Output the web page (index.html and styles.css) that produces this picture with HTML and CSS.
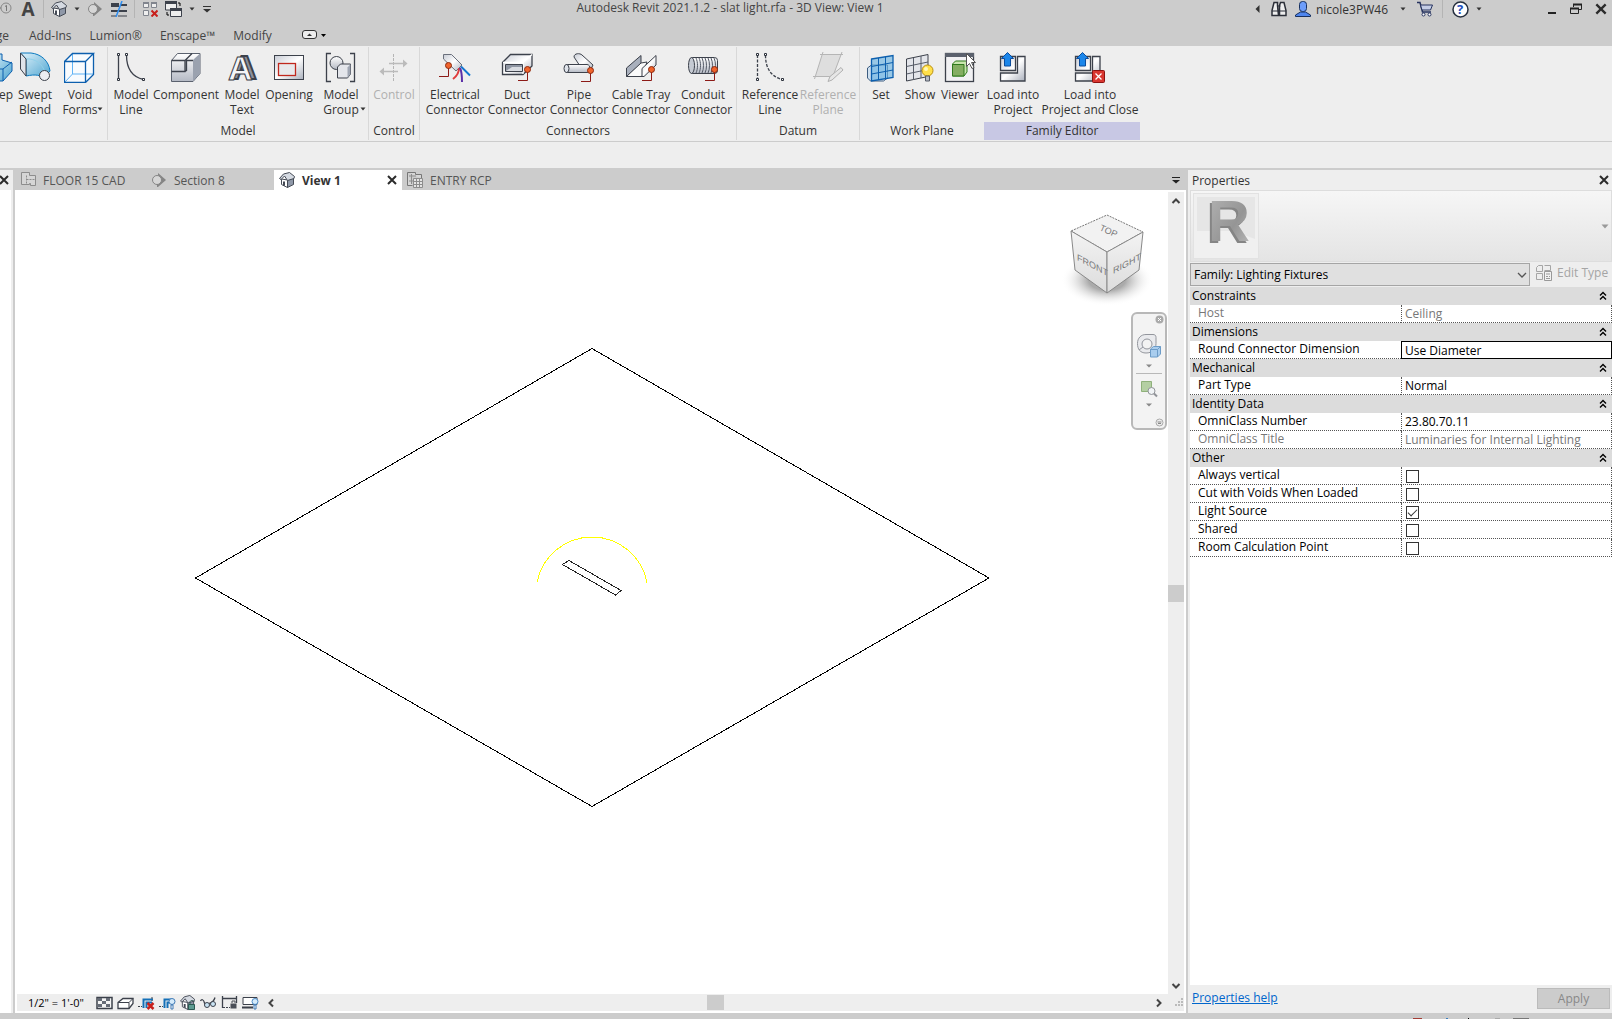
FILE: index.html
```
<!DOCTYPE html>
<html lang="en">
<head>
  <meta charset="UTF-8" />
  <meta name="viewport" content="width=device-width, initial-scale=1" />
  <title>Autodesk Revit 2021.1.2 - slat light.rfa - 3D View: View 1</title>
  <link rel="stylesheet" href="styles.css">
</head>
<body>
  <!-- shared gradients and symbols -->
  <svg class="defs" width="0" height="0" aria-hidden="true">
    <defs>
      <linearGradient id="metal" x1="0" y1="0" x2="0" y2="1"><stop offset="0" stop-color="#fff"/><stop offset="1" stop-color="#b4b9c4"/></linearGradient>
      <linearGradient id="metal-side" x1="0" y1="0" x2="1" y2="1"><stop offset="0" stop-color="#c9cdd6"/><stop offset="0.5" stop-color="#fff"/><stop offset="1" stop-color="#aab0bc"/></linearGradient>
      <linearGradient id="blue" x1="0" y1="0" x2="1" y2="1"><stop offset="0" stop-color="#dff2fb"/><stop offset="1" stop-color="#4ba3cf"/></linearGradient>
      <linearGradient id="cube-face" x1="0" y1="0" x2="0" y2="1"><stop offset="0" stop-color="#f3f3f3"/><stop offset="1" stop-color="#dcdcdc"/></linearGradient>
      <linearGradient id="logo" x1="0" y1="0" x2="1" y2="1"><stop offset="0" stop-color="#b5b5b5"/><stop offset="0.6" stop-color="#959595"/><stop offset="1" stop-color="#bdbdbd"/></linearGradient>
      <radialGradient id="shadow"><stop offset="0.4" stop-color="#aaa"/><stop offset="1" stop-color="#fff" stop-opacity="0"/></radialGradient>
      <symbol id="house" viewBox="0 0 16 16">
        <path d="M2.500 7V12.500l6 3V8z" fill="#fff" stroke="#444a55"/>
        <path d="M8.500 8 14.500 6v6.500l-6 3z" fill="#8f98a8" stroke="#444a55"/>
        <path d="M0.500 6.500 4.500 2l6-1.500 5 4-0.500 2-6.500 2-3-4.500-3.500 3.500z" fill="#d5dae2" stroke="#444a55"/>
        <path d="M4 9.500h2V14L4 13z" fill="#444a55"/>
      </symbol>
      <symbol id="section" viewBox="0 0 16 16">
        <path d="M7 1 15 8l-8 7z" fill="#858585"/>
        <circle cx="6" cy="8" r="4.500" fill="#d6d6d6" stroke="#858585"/>
        <path d="M6.500 12v3" stroke="#858585"/>
      </symbol>
      <symbol id="close" viewBox="0 0 12 12"><path d="M2 2l8 8M10 2l-8 8" stroke="#2b2b2b" stroke-width="2"/></symbol>
      <symbol id="caret" viewBox="0 0 6 4"><path d="M0.500 0.500h5L3 3.500z" fill="#333"/></symbol>
      <symbol id="collapse" viewBox="0 0 8 10"><path d="M1 4.500 4 1.500 7 4.500M1 8.500 4 5.500 7 8.500" fill="none" stroke="#000" stroke-width="1.400"/></symbol>
    </defs>
  </svg>

  <header class="titlebar">
    <div class="quick-access">
      <button class="qa" aria-label="Tag"><svg width="12" height="16" viewBox="0 0 12 16"><circle cx="6" cy="7" r="5" fill="none" stroke="#888"/><path d="M0 7h1M5 5.500l1.500-1V10" fill="none" stroke="#777"/></svg></button>
      <button class="qa-text" aria-label="Text">A</button>
      <span class="bar-sep"></span>
      <button class="qa" aria-label="Default 3D View"><svg width="16" height="16"><use href="#house"/></svg></button>
      <button class="qa-caret" aria-label="3D View options"><svg width="6" height="4"><use href="#caret"/></svg></button>
      <button class="qa" aria-label="Section"><svg width="16" height="16"><use href="#section"/></svg></button>
      <button class="qa qa-wide" aria-label="Thin Lines"><svg width="18" height="16" viewBox="0 0 18 16"><path d="M1 2h8v4H1z" fill="#3c414b"/><path d="M1 10h7M11 4h6M9 10h8" stroke="#3c414b" stroke-width="2"/><path d="M1 15h5M8 15h9" stroke="#3c414b"/><path d="M12 0 6 16" stroke="#2f8ef0" stroke-width="1.500"/></svg></button>
      <span class="bar-sep"></span>
      <button class="qa" aria-label="Close Hidden Windows"><svg width="16" height="16" viewBox="0 0 16 16"><path d="M1.500 1.500h5v5h-5zM9.500 1.500h5v5h-5zM1.500 9.500h5v5h-5z" fill="#eee" stroke="#81858e"/><path d="M1 1h6v2H1zM9 1h6v2H9z" fill="#81858e"/><path d="M9.500 9.500l6 6M15.500 9.500l-6 6" stroke="#c8201c" stroke-width="2"/></svg></button>
      <button class="qa" aria-label="Switch Windows"><svg width="17" height="16" viewBox="0 0 17 16"><path d="M0.500 1h11v8h-11z" fill="#eee" stroke="#3c414b"/><path d="M0 0h12v3H0z" fill="#3c414b"/><path d="M5.500 8h11v7.500h-11z" fill="#eee" stroke="#3c414b"/><path d="M5 7h12v3H5z" fill="#3c414b"/><path d="M13 2h2v3M2 11v3h2" fill="none" stroke="#000"/></svg></button>
      <button class="qa-caret" aria-label="Window list"><svg width="6" height="4"><use href="#caret"/></svg></button>
      <button class="qa" aria-label="Customize Quick Access Toolbar"><svg width="10" height="8" viewBox="0 0 10 8"><path d="M1 1.500h8" stroke="#333"/><path d="M1 4h8L5 7.500z" fill="#333"/></svg></button>
    </div>
    <div class="window-title">Autodesk Revit 2021.1.2 - slat light.rfa - 3D View: View 1</div>
    <div class="info-center">
      <button class="qa-caret" aria-label="Collapse search"><svg width="5" height="8" viewBox="0 0 5 8"><path d="M4.500 0v8L0.500 4z" fill="#333"/></svg></button>
      <button class="qa" aria-label="Search"><svg width="16" height="16" viewBox="0 0 16 16"><path d="M3 1.500h3.500v3L7.500 14.500h-6.500v-5zM9.500 1.500H13l2 8v5H8.500v-10z" fill="#eee" stroke="#2b2f38" stroke-width="1.500"/><path d="M1 10h6M9 10h6M6.500 5h3" stroke="#2b2f38"/></svg></button>
      <button class="account"><svg width="16" height="16" viewBox="0 0 16 16"><path d="M0.500 15.500v-1.500l5-3h5l5 3v1.500z" fill="#4f86ee" stroke="#17305f"/><rect x="4.500" y="0.500" width="7" height="10" rx="3" fill="#6d9dfa" stroke="#17305f"/></svg>nicole3PW46<svg class="account-caret" width="6" height="4"><use href="#caret"/></svg></button>
      <button class="qa" aria-label="App Store"><svg width="16" height="16" viewBox="0 0 16 16"><path d="M0 1.500h3L5.500 11H14" fill="none" stroke="#26335f" stroke-width="1.500"/><path d="M3.500 4h12L13.500 9H5z" fill="#c4cde6" stroke="#26335f"/><circle cx="6.500" cy="13.500" r="1.500" fill="#fff" stroke="#26335f"/><circle cx="12.500" cy="13.500" r="1.500" fill="#fff" stroke="#26335f"/></svg></button>
      <span class="bar-sep"></span>
      <button class="qa qa-help" aria-label="Help"><svg width="17" height="17" viewBox="0 0 17 17"><circle cx="8.500" cy="8.500" r="7.500" fill="#fff" stroke="#26303f" stroke-width="1.500"/><text x="5" y="13" font-size="13" font-weight="bold" fill="#1e4fc0">?</text></svg></button>
      <button class="qa-caret" aria-label="Help options"><svg width="6" height="4"><use href="#caret"/></svg></button>
    </div>
    <div class="window-buttons">
      <button aria-label="Minimize"><svg width="12" height="12" viewBox="0 0 12 12"><path d="M2 10h8" stroke="#222" stroke-width="2"/></svg></button>
      <button aria-label="Restore"><svg width="12" height="12" viewBox="0 0 12 12"><path d="M3.500 4V1.500h8v5H9" fill="none" stroke="#222"/><path d="M3 1.500h9M0 5.500h9" stroke="#222" stroke-width="2"/><path d="M0.500 5v5.500h8V5" fill="none" stroke="#222"/></svg></button>
      <button aria-label="Close"><svg width="14" height="14"><use href="#close"/></svg></button>
    </div>
  </header>

  <nav class="menu-tabs">
    <a class="menu-first" href="#">ge</a>
    <a href="#">Add-Ins</a>
    <a href="#">Lumion®</a>
    <a href="#">Enscape™</a>
    <a href="#">Modify</a>
    <button class="ribbon-toggle" aria-label="Minimize ribbon"><svg width="24" height="10" viewBox="0 0 24 10"><rect x="0.500" y="0.500" width="14" height="8" rx="2.500" fill="#eee" stroke="#333"/><path d="M5 6h5L7.500 3.500z" fill="#333"/><path d="M19 4h5l-2.500 3z" fill="#000"/></svg></button>
  </nav>

  <section class="ribbon">
    <div class="panel panel-forms">
      <div class="tools">
        <button class="tool tool-first"><svg class="icon" viewBox="0 0 32 32"><path d="M14 3h7v6l10 3v8l-9 10H8V14h6z" fill="url(#blue)" stroke="#0c5fae"/><path d="M8 18h14v12M22 18l9-7" fill="none" stroke="#0c5fae"/></svg><span>ep</span></button>
        <button class="tool"><svg class="icon" viewBox="0 0 32 32"><path d="M1.500 2H12C22 3 30 10 31 20l-7 8C22 24 17 23 7 25V8z" fill="url(#blue)" stroke="#0c7ac0"/><path d="M7 8c9-1 17 5 19 14" fill="none" stroke="#8fd0ea"/><path d="M1.500 2 7 8v17L1.500 18z" fill="#dfe3ea" stroke="#3c414b"/><circle cx="25.500" cy="24.500" r="5" fill="#eceef2" stroke="#3c414b"/></svg><span>Swept<br>Blend</span></button>
        <button class="tool"><svg class="icon" viewBox="0 0 32 32"><path d="M8.500 2.500h21v21l-8 8h-21v-21z" fill="#f8fbfe"/><path d="M8.500 3v20H29M8.500 23 1 31" fill="none" stroke="#5fb2f5"/><path d="M0.500 10.500h21v21h-21zM0.500 10.500l8-8h21l-8 8M29.500 2.500v21l-8 8" fill="none" stroke="#0c5fae" stroke-width="1.300"/></svg><span>Void<br>Forms</span><svg class="drop" width="6" height="4"><use href="#caret"/></svg></button>
      </div>
    </div>
    <div class="panel panel-model">
      <div class="tools">
        <button class="tool"><svg class="icon" viewBox="0 0 32 32"><path d="M3.500 4v24M11.500 4c0 14 6 22 17 24.500" fill="none" stroke="#3c414b" stroke-width="1.300"/><path d="M2.500 2.500h2v2h-2zM2.500 27.500h2v2h-2zM10.500 2.500h2v2h-2zM27.500 27.500h2v2h-2z" fill="#fff" stroke="#2d323c"/></svg><span>Model<br>Line</span></button>
        <button class="tool"><svg class="icon" viewBox="0 0 32 32"><path d="M1.500 9.500 7.500 2.500H30v20l-7 8H1.500z" fill="url(#metal)" stroke="#5a616e"/><path d="M23 9 30 2.500v20l-7 8z" fill="#9ba2af"/><path d="M1.500 9.500H15v11H1.500M15 9.500 22 2.500M16.500 20V9.500H23M15 20.500l1.500-1" fill="none" stroke="#3c414b" stroke-width="1.300"/></svg><span>Component</span></button>
        <button class="tool"><svg class="icon" viewBox="0 0 32 32"><text class="glyph-a" x="6" y="28" font-size="34" fill="#8c929e" stroke="#3c414b" stroke-width="2">A</text><text class="glyph-a" x="2" y="29" font-size="34" fill="#f4f5f7" stroke="#3c414b">A</text></svg><span>Model<br>Text</span></button>
        <button class="tool"><svg class="icon" viewBox="0 0 32 32"><rect x="1.500" y="4.500" width="29" height="24" fill="url(#metal-side)" stroke="#3c414b"/><rect x="5.500" y="12.500" width="17" height="12" fill="#e8e9ec" stroke="#c0281e" stroke-width="1.300"/></svg><span>Opening</span></button>
        <button class="tool"><svg class="icon" viewBox="0 0 32 32"><path d="M6 2.500H1.500v28H6M25 2.500h4.500v28H25" fill="none" stroke="#3c414b" stroke-width="1.300"/><circle cx="11.500" cy="12" r="6.500" fill="url(#metal)" stroke="#3c414b"/><path d="M12.500 16l3-3h10v10l-3 4h-10z" fill="#e4e6eb" stroke="#3c414b"/><path d="M22.500 16.500l3-3.500v10l-3 4z" fill="#9fa6b3"/></svg><span>Model<br>Group</span><svg class="drop" width="6" height="4"><use href="#caret"/></svg></button>
      </div>
      <h2>Model</h2>
    </div>
    <div class="panel panel-control">
      <div class="tools">
        <button class="tool" disabled><svg class="icon" viewBox="0 0 32 32"><path d="M15.500 3v28" stroke="#b5b5b5" stroke-dasharray="3 1"/><path d="M11 12.500h15M20 20.500H5" stroke="#bbb" stroke-width="1.500"/><path d="M25 8.500l4.500 4-4.500 4zM6 16.500l-4.500 4 4.500 4z" fill="#bbb"/></svg><span>Control</span></button>
      </div>
      <h2>Control</h2>
    </div>
    <div class="panel panel-connectors">
      <div class="tools">
        <button class="tool"><svg class="icon" viewBox="0 0 32 32"><path d="M4.500 3.500h8L23 14l-6 6L4.500 8z" fill="url(#metal-side)" stroke="#6a707c"/><path d="M20 17c0 5-2 8-6 11" fill="none" stroke="#e03c3c" stroke-width="2"/><path d="M21 17c2 4 2 9 2 14" fill="none" stroke="#5b2fa8" stroke-width="2"/><path d="M22 15.500l9 9" stroke="#1376d0" stroke-width="2"/><path d="M9.500 15v10.500H0" fill="none" stroke="#8c1a16"/><circle cx="9.500" cy="14.500" r="3" fill="#f0642c" stroke="#8c2a10"/></svg><span>Electrical<br>Connector</span></button>
        <button class="tool"><svg class="icon" viewBox="0 0 32 32"><path d="M1.500 11.500l8-8H31V15l-9 8.500H1.500z" fill="url(#metal-side)" stroke="#3c414b" stroke-width="1.300"/><path d="M2 11.500h20V23M22 11.500l9-8" fill="none" stroke="#fff" stroke-width="1.300"/><path d="M4.500 13.500h17v7h-17z" fill="#d9dce2" stroke="#3c414b"/><path d="M5 14v6l6-4h10v-2z" fill="#8f96a3"/><path d="M26.500 18v11.500H17" fill="none" stroke="#8c1a16"/><circle cx="26.500" cy="18.500" r="3" fill="#f0642c" stroke="#8c2a10"/></svg><span>Duct<br>Connector</span></button>
        <button class="tool"><svg class="icon" viewBox="0 0 32 32"><path d="M11 6c0-4 6-4 8-2l11 10-3 6-8-2z" fill="url(#metal-side)" stroke="#3c414b"/><path d="M3 13.500h21c4 0 4 8 0 8H3z" fill="url(#metal)" stroke="#3c414b"/><ellipse cx="3.500" cy="17.500" rx="2.500" ry="4" fill="#dfe3ea" stroke="#3c414b"/><path d="M27.500 19v11.500H18" fill="none" stroke="#8c1a16"/><circle cx="27.500" cy="19.500" r="3" fill="#f0642c" stroke="#8c2a10"/></svg><span>Pipe<br>Connector</span></button>
        <button class="tool"><svg class="icon" viewBox="0 0 32 32"><path d="M1.500 17 16 4.500v8L1.500 25.500z" fill="#a9b0bd" stroke="#3c414b"/><path d="M1.500 25.500 16 12l6-1-5 14.500z" fill="#fafafa" stroke="#3c414b"/><path d="M17 17.500 31 4.500V14L19 25.500h-2z" fill="url(#metal-side)" stroke="#3c414b"/><path d="M26.500 18v11.500H17" fill="none" stroke="#8c1a16"/><circle cx="26.500" cy="18.500" r="3" fill="#f0642c" stroke="#8c2a10"/></svg><span>Cable Tray<br>Connector</span></button>
        <button class="tool"><svg class="icon" viewBox="0 0 32 32"><rect x="3" y="6.500" width="27.500" height="16" rx="3" fill="url(#metal)" stroke="#3c414b"/><path d="M9 7c2 4 2 11 0 15M12 7c2 4 2 11 0 15M15 7c2 4 2 11 0 15M18 7c2 4 2 11 0 15M21 7c2 4 2 11 0 15M24 7c2 4 2 11 0 15M27 7c2 4 2 11 0 15" fill="none" stroke="#555b67"/><ellipse cx="4.500" cy="14.500" rx="3" ry="8" fill="#c5cad3" stroke="#3c414b"/><path d="M27.500 18v11.500H18" fill="none" stroke="#8c1a16"/><circle cx="27.500" cy="18.500" r="3" fill="#f0642c" stroke="#8c2a10"/></svg><span>Conduit<br>Connector</span></button>
      </div>
      <h2>Connectors</h2>
    </div>
    <div class="panel panel-datum">
      <div class="tools">
        <button class="tool"><svg class="icon" viewBox="0 0 32 32"><path d="M3.500 4v24M11.500 4c0 14 6 22 17 24.500" fill="none" stroke="#3c414b" stroke-width="1.300" stroke-dasharray="3 1.500"/><path d="M2.500 2.500h2v2h-2zM2.500 27.500h2v2h-2zM10.500 2.500h2v2h-2zM27.500 27.500h2v2h-2z" fill="#fff" stroke="#2d323c"/></svg><span>Reference<br>Line</span></button>
        <button class="tool" disabled><svg class="icon" viewBox="0 0 32 32"><path d="M10.500 3.500h19L21 25.500H3z" fill="#dedede"/><path d="M8 3.500h23M1 25.500h21M11 1 2.500 28M30 1 21 25" fill="none" stroke="#b5b5b5"/><path d="M16 30.500l2-5 11-9 2 2.500-11 10z" fill="#e6e6e6" stroke="#b0b0b0"/></svg><span>Reference<br>Plane</span></button>
      </div>
      <h2>Datum</h2>
    </div>
    <div class="panel panel-workplane">
      <div class="tools">
        <button class="tool"><svg class="icon" viewBox="0 0 32 32"><path d="M2.500 17l4-3h16v13l-4 3h-13l-3-3z" fill="#cfe0ef" stroke="#3c5c80"/><path d="M6.500 8 28 4.500v22L6.500 30z" fill="#6cb4e2" fill-opacity="0.650" stroke="#0c5fae" stroke-width="1.300"/><path d="M13.500 7v22M20.500 6v22M6.500 15.500 28 11.500M6.500 23 28 19" stroke="#0c5fae"/></svg><span>Set</span></button>
        <button class="tool"><svg class="icon" viewBox="0 0 32 32"><path d="M2.500 8 24 3.500v22L2.500 30z" fill="#e3e5ea" stroke="#3c414b"/><path d="M9.500 7v22M17 5v22M2.500 15.500 24 11M2.500 23 24 18.500" stroke="#555b67"/><circle cx="23.500" cy="19.500" r="5.500" fill="#ffe04a" stroke="#b98d10"/><circle cx="22" cy="18" r="2" fill="#fff7b8"/><path d="M21.500 25h4v5h-4z" fill="#b7bcc6" stroke="#555b67"/></svg><span>Show</span></button>
        <button class="tool"><svg class="icon" viewBox="0 0 32 32"><rect x="1.500" y="2.500" width="28" height="28" fill="#f1f1f3" stroke="#3c414b" stroke-width="1.300"/><path d="M1 2h29v4H1z" fill="#5b616d"/><path d="M8.500 13l3-3H23v11l-3 4H8.500z" fill="#c9e6ae" stroke="#2f7a1d"/><path d="M8.500 13.500H20V25H8.500z" fill="#84ae62" stroke="#2f7a1d"/><path d="M22.500 2.500v13l3-3 2.500 5 2-1-2.500-5h4z" fill="#fff" stroke="#555"/></svg><span>Viewer</span></button>
      </div>
      <h2>Work Plane</h2>
    </div>
    <div class="panel panel-editor">
      <div class="tools">
        <button class="tool"><svg class="icon" viewBox="0 0 32 32"><path d="M3.500 5.500h15v14h-15zM20.500 5.500h7.500v24.500H3.500v-8h17z" fill="url(#metal-side)" stroke="#3c414b" stroke-width="1.300"/><path d="M10.500 1.500l6 6h-3V15h-6V7.500h-3z" fill="#1b86ea" stroke="#0b4c9c"/></svg><span>Load into<br>Project</span></button>
        <button class="tool"><svg class="icon" viewBox="0 0 32 32"><path d="M1.500 5.500h15v14h-15zM18.500 5.500H26v24.500H1.500v-8h17z" fill="url(#metal-side)" stroke="#3c414b" stroke-width="1.300"/><path d="M8.500 1.500l6 6h-3V15h-6V7.500h-3z" fill="#1b86ea" stroke="#0b4c9c"/><rect x="18.500" y="19.500" width="12" height="12" rx="1" fill="#d93630" stroke="#8c1210"/><path d="M21.500 22.500l6 6M27.500 22.500l-6 6" stroke="#fff" stroke-width="1.300"/></svg><span>Load into<br>Project and Close</span></button>
      </div>
      <h2>Family Editor</h2>
    </div>
  </section>
  <div class="options-bar"></div>

  <main class="workspace">
    <aside class="left-dock">
      <button aria-label="Close panel"><svg width="12" height="12"><use href="#close"/></svg></button>
    </aside>

    <section class="document">
      <div class="view-tabs">
        <button class="view-tab tab-floor"><svg width="16" height="16" viewBox="0 0 16 16"><path d="M1.500 0.500h8v3h6v10h-5v-2h-1v1h-8z" fill="#d6d6d6" stroke="#8d8d8d"/><path d="M6.500 3.500v9M6.500 7.500h9" stroke="#8d8d8d" stroke-dasharray="2 1"/></svg>FLOOR 15 CAD</button>
        <button class="view-tab tab-section"><svg width="16" height="16"><use href="#section"/></svg>Section 8</button>
        <div class="view-tab active"><svg width="16" height="16"><use href="#house"/></svg><span>View 1</span><button aria-label="Close view"><svg width="12" height="12"><use href="#close"/></svg></button></div>
        <button class="view-tab"><svg width="16" height="16" viewBox="0 0 16 16"><path d="M0.500 0.500h8v2h6v4M0.500 0.500v13h5" fill="#d6d6d6" stroke="#777"/><path d="M2 4h7M2 9h4M4.500 2v10" stroke="#8d8d8d"/><path d="M6.500 6.500h9v9h-9zM6.500 9.500h9M6.500 12.500h9M9.500 6.500v9M12.500 6.500v9" fill="#e4e4e4" stroke="#8d8d8d"/></svg>ENTRY RCP</button>
        <button class="tab-list" aria-label="View list"><svg width="10" height="8" viewBox="0 0 10 8"><path d="M1 1.500h8" stroke="#222"/><path d="M1 4h8L5 7.500z" fill="#222"/></svg></button>
      </div>

      <div class="canvas-row">
        <div class="canvas">
          <svg class="drawing" viewBox="15 190 1153 804">
            <path d="M592 348.500 989 578 592 806.500 195.500 578z" fill="none" stroke="#000"/>
            <path d="M537 582.500a56 56 0 0 1 110 0" fill="none" stroke="#ffff00"/>
            <path d="M562.500 564.500 569 560.500 621 590.500 615.500 595z" fill="none" stroke="#222"/>
          </svg>

          <svg class="view-cube" width="100" height="100" viewBox="0 0 100 100">
            <ellipse cx="50" cy="68" rx="46" ry="26" fill="url(#shadow)"/>
            <path d="M50 3 86 20 50 40 14 19z" fill="#f2f2f2" stroke="#777" stroke-dasharray="2 1"/>
            <path d="M14 19 50 40V81L18 58z" fill="url(#cube-face)" stroke="#888"/>
            <path d="M86 20 50 40V81L82 58z" fill="url(#cube-face)" stroke="#888"/>
            <text x="20" y="48" transform="translate(20 48) skewY(28) translate(-20 -48)">FRONT</text>
            <text x="56" y="62" transform="translate(56 62) skewY(-28) translate(-56 -62)">RIGHT</text>
            <text x="42" y="18" transform="rotate(24 42 18)">TOP</text>
          </svg>

          <div class="nav-bar">
            <button class="nav-close" aria-label="Close navigation bar"><svg width="9" height="9" viewBox="0 0 9 9"><circle cx="4.500" cy="4.500" r="4" fill="#aaa"/><path d="M3 3l3 3M6 3l-3 3" stroke="#fff"/></svg></button>
            <button class="nav-wheel" aria-label="Steering wheel"><svg width="26" height="26" viewBox="0 0 26 26"><path d="M10 1.500h7c2 0 3 1 3 3v6c0 6-4 9.500-10 9.500S1.500 16 1.500 10.500 5 1.500 10 1.500z" fill="#e9eaed" stroke="#92959c"/><circle cx="11" cy="11" r="5" fill="#f3f3f3" stroke="#92959c"/><path d="M3 17l4-3" stroke="#92959c"/><path d="M14.500 16l3-2.500h7V21l-3 3h-7z" fill="#a9cdee" stroke="#6d9cc8"/><path d="M14.500 16.500h7V24M21.500 16.500l3-3" fill="none" stroke="#6d9cc8"/></svg></button>
            <button aria-label="Wheel options"><svg width="6" height="4" viewBox="0 0 6 4"><path d="M0 0.500h6L3 3.500z" fill="#888"/></svg></button>
            <hr>
            <button aria-label="Zoom"><svg width="18" height="18" viewBox="0 0 18 18"><path d="M1.500 1.500h10v10h-10z" fill="#b4cfa3" stroke="#8fb17b"/><circle cx="11.500" cy="11" r="3.500" fill="#f1f4f6" stroke="#909398"/><path d="M14 13.500l3 3" stroke="#909398" stroke-width="2"/></svg></button>
            <button aria-label="Zoom options"><svg width="6" height="4" viewBox="0 0 6 4"><path d="M0 0.500h6L3 3.500z" fill="#888"/></svg></button>
            <button class="nav-more" aria-label="Customize navigation bar"><svg width="9" height="9" viewBox="0 0 9 9"><circle cx="4.500" cy="4.500" r="3.500" fill="#eee" stroke="#aaa"/><path d="M2.500 4h4M3 5.500h3" stroke="#888"/></svg></button>
          </div>
        </div>
        <div class="scroll-y">
          <button aria-label="Scroll up"><svg width="10" height="8" viewBox="0 0 10 8"><path d="M1.500 6 5 2.500 8.500 6" fill="none" stroke="#444" stroke-width="2"/></svg></button>
          <div class="thumb"></div>
          <button aria-label="Scroll down"><svg width="10" height="8" viewBox="0 0 10 8"><path d="M1.500 2 5 5.500 8.500 2" fill="none" stroke="#444" stroke-width="2"/></svg></button>
        </div>
      </div>

      <div class="view-controls">
        <button class="scale">1/2" = 1'-0"</button>
        <div class="view-icons">
          <button aria-label="Detail level"><svg width="17" height="16" viewBox="0 0 17 16"><path d="M1 2.500h15v11H1z" fill="#f4f4f4" stroke="#3c414b" stroke-width="1.500"/><path d="M2 3h4v3H2zM10 3h4v3h-4zM6 6h4v3H6zM2 9h4v3H2zM10 9h4v3h-4z" fill="#666c77"/></svg></button>
          <button aria-label="Visual style"><svg width="17" height="16" viewBox="0 0 17 16"><path d="M1 7.500l5-4h10v5l-4 5H1z" fill="#fff" stroke="#3c414b" stroke-width="1.300"/><path d="M1 7.500h11v6M12 7.500l4-4" fill="none" stroke="#3c414b"/></svg></button>
          <button aria-label="Crop view off"><svg width="17" height="16" viewBox="0 0 17 16"><path d="M5.500 13V4.500H15M8.500 13V7.500H14" fill="none" stroke="#1470b8" stroke-width="2"/><path d="M0 11.500h4M14 2v4" stroke="#3c414b" stroke-dasharray="2 1"/><path d="M9.500 8l6 6M15.500 8l-6 6" stroke="#c8201c" stroke-width="2.500"/></svg></button>
          <button aria-label="Hide crop region"><svg width="17" height="16" viewBox="0 0 17 16"><path d="M5.500 13V4.500H12M8.500 13V7.500H11" fill="none" stroke="#1470b8" stroke-width="2"/><path d="M0 11.500h4" stroke="#3c414b" stroke-dasharray="2 1"/><circle cx="13" cy="6.500" r="3" fill="#d5ebfb" stroke="#3e78b4"/><path d="M12 10h2v4h-2z" fill="#fff" stroke="#3e78b4"/></svg></button>
          <button aria-label="Unlocked 3D view"><svg width="16" height="16" viewBox="0 0 16 16"><use href="#house" width="15" height="15"/><path d="M8.500 9.500h6v5h-6z" fill="#5e9c92" stroke="#2b5a52"/><path d="M10 9.500V7c0-2 4-2 4 0" fill="none" stroke="#2b5a52"/></svg></button>
          <button aria-label="Temporary hide"><svg width="17" height="16" viewBox="0 0 17 16"><path d="M0.500 6c1-2 3-2 4 2s3 4 4 1M9 8.500c3-1 5-2 6-6" fill="none" stroke="#3c414b" stroke-width="1.300"/><circle cx="7" cy="10" r="2.500" fill="#c9e3f3" stroke="#3c414b"/><circle cx="13" cy="9" r="2.500" fill="#c9e3f3" stroke="#3c414b"/></svg></button>
          <button aria-label="Reveal constraints"><svg width="17" height="16" viewBox="0 0 17 16"><path d="M1.500 1v12M15.500 1v7M2 3.500h13" stroke="#3c414b" stroke-width="1.300"/><path d="M2 12.500h7" stroke="#3c414b" stroke-dasharray="2 1"/><path d="M9.500 8.500h6v5h-6z" fill="#4a4e57"/><path d="M11 8V6h3v2" fill="none" stroke="#4a4e57"/></svg></button>
          <button aria-label="Preview visibility"><svg width="17" height="16" viewBox="0 0 17 16"><path d="M1 2.500h14v7H1z" fill="#fff" stroke="#3c414b"/><path d="M0 12.500h11" stroke="#3c414b" stroke-width="2"/><circle cx="13" cy="6.500" r="3" fill="#d5ebfb" stroke="#4a8ac8"/><path d="M12 10h2v4h-2z" fill="#fff" stroke="#3e78b4"/></svg></button>
        </div>
        <div class="scroll-x">
          <button aria-label="Scroll left"><svg width="8" height="10" viewBox="0 0 8 10"><path d="M6 1.500 2.500 5 6 8.500" fill="none" stroke="#444" stroke-width="2"/></svg></button>
          <div class="thumb"></div>
          <button aria-label="Scroll right"><svg width="8" height="10" viewBox="0 0 8 10"><path d="M2 1.500 5.500 5 2 8.500" fill="none" stroke="#444" stroke-width="2"/></svg></button>
        </div>
        <svg class="grip" width="10" height="10" viewBox="0 0 10 10"><path d="M7 0h2v2H7zM4 3h2v2H4zM7 3h2v2H7zM1 6h2v2H1zM4 6h2v2H4zM7 6h2v2H7z" fill="#bbb"/></svg>
      </div>
    </section>

    <aside class="properties">
      <div class="prop-title"><span>Properties</span><button aria-label="Close properties"><svg width="12" height="12"><use href="#close"/></svg></button></div>
      <button class="type-selector" aria-label="Type selector" disabled>
        <svg class="thumb-logo" width="66" height="66" viewBox="0 0 66 66"><rect x="0.500" y="0.500" width="65" height="65" fill="#f0f0f0" stroke="#e2e2e2"/><path d="M4 4h58v42L40 38H4z" fill="#e6e6e6"/><text x="13" y="50" font-size="58" fill="#858585">R</text><text x="15" y="48" font-size="58" fill="url(#logo)">R</text></svg>
        <svg width="8" height="5" viewBox="0 0 8 5"><path d="M0.500 0.500h7L4 4.500z" fill="#999"/></svg>
      </button>
      <div class="type-row">
        <div class="select-wrap">
          <select aria-label="Family"><option>Family: Lighting Fixtures</option></select>
          <svg width="10" height="6" viewBox="0 0 10 6"><path d="M1 1l4 4 4-4" fill="none" stroke="#555" stroke-width="1.300"/></svg>
        </div>
        <button class="edit-type" disabled><svg width="16" height="16" viewBox="0 0 16 16"><path d="M0.500 2.500l2-2h4v6h-6zM8.500 0.500h6v5h-6M0.500 8.500h6v6h-6z" fill="#eee" stroke="#a5a5a5"/><path d="M8.500 6.500h7v9h-7z" fill="#f2f2f2" stroke="#999"/><path d="M10 9h4M10 11.500h2M13 11.500h1M10 13.500h4" stroke="#999"/></svg>Edit Type</button>
      </div>
      <div class="prop-list">
        <table>
          <tr class="group"><th colspan="2"><div>Constraints<svg width="8" height="10"><use href="#collapse"/></svg></div></th></tr>
          <tr class="readonly"><td><label for="host">Host</label></td><td><input id="host" type="text" value="Ceiling" disabled></td></tr>
          <tr class="group"><th colspan="2"><div>Dimensions<svg width="8" height="10"><use href="#collapse"/></svg></div></th></tr>
          <tr><td><label for="round">Round Connector Dimension</label></td><td class="selected"><input id="round" type="text" value="Use Diameter"></td></tr>
          <tr class="group"><th colspan="2"><div>Mechanical<svg width="8" height="10"><use href="#collapse"/></svg></div></th></tr>
          <tr><td><label for="part">Part Type</label></td><td><input id="part" type="text" value="Normal"></td></tr>
          <tr class="group"><th colspan="2"><div>Identity Data<svg width="8" height="10"><use href="#collapse"/></svg></div></th></tr>
          <tr><td><label for="omni-number">OmniClass Number</label></td><td><input id="omni-number" type="text" value="23.80.70.11"></td></tr>
          <tr class="readonly"><td><label for="omni-title">OmniClass Title</label></td><td><input id="omni-title" type="text" value="Luminaries for Internal Lighting" disabled></td></tr>
          <tr class="group"><th colspan="2"><div>Other<svg width="8" height="10"><use href="#collapse"/></svg></div></th></tr>
          <tr><td><label for="vertical">Always vertical</label></td><td><input id="vertical" type="checkbox"></td></tr>
          <tr><td><label for="voids">Cut with Voids When Loaded</label></td><td><input id="voids" type="checkbox"></td></tr>
          <tr><td><label for="light">Light Source</label></td><td><input id="light" type="checkbox" checked></td></tr>
          <tr><td><label for="shared">Shared</label></td><td><input id="shared" type="checkbox"></td></tr>
          <tr><td><label for="room">Room Calculation Point</label></td><td><input id="room" type="checkbox"></td></tr>
        </table>
      </div>
      <div class="prop-footer">
        <a href="#">Properties help</a>
        <button disabled>Apply</button>
      </div>
    </aside>
  </main>

  <footer class="status-bar">
    <svg width="200" height="1" viewBox="0 0 200 1"><path d="M1 0h9v1H1z" fill="#a33c34"/><path d="M34 0h2v1h-2z" fill="#3a7fc0"/><path d="M56 0h1v1h-1z" fill="#000"/><path d="M83 0h5v1h-5z" fill="#aaa"/><path d="M101 0h16v1h-16z" fill="#777"/></svg>
  </footer>
</body>
</html>
```
FILE: styles.css
```
* {
  box-sizing: border-box;
}

html, body {
  height: 100%;
  margin: 0;
}

body {
  display: flex;
  flex-direction: column;
  overflow: hidden;
  background: #ccc;
  color: #333;
  font-family: "Open Sans", "Noto Sans", sans-serif;
  font-size: 12px;
  line-height: 15px;
}

button, input, select {
  font: inherit;
  color: inherit;
}

button {
  padding: 0;
  border: 0;
  background: none;
}

svg {
  display: block;
  flex: none;
}

.defs {
  position: absolute;
}

/* title bar */
.titlebar {
  display: flex;
  align-items: flex-start;
  height: 24px;
}

.quick-access,
.info-center,
.window-buttons {
  display: flex;
  align-items: center;
  height: 18px;
}

.quick-access {
  width: 212px;
}

.qa-text {
  margin-left: 9px;
  width: 14px;
  font-size: 19px;
  line-height: 18px;
  font-weight: bold;
  color: #444;
}

.quick-access .bar-sep {
  margin: 0 7px 0 8px;
}

.bar-sep {
  width: 1px;
  height: 18px;
  background: #b4b4b4;
}

.qa-caret {
  padding: 0 7px;
}

.quick-access .qa-wide + .bar-sep {
  margin: 0 7px 0 6px;
}

.qa + .qa {
  margin-left: 7px;
}

.window-title {
  flex: 1;
  text-align: center;
  color: #444;
}

.info-center .qa {
  margin: 0 4px;
}

.info-center .qa-help {
  margin-right: 0;
}

.account {
  display: flex;
  align-items: center;
  gap: 5px;
  margin: 0 7px 0 4px;
}

.account-caret {
  margin-left: 7px;
}

.info-center .bar-sep {
  margin: 0 5px;
}

.window-buttons {
  gap: 12px;
  padding: 0 4px 0 57px;
}

/* menu tabs */
.menu-tabs {
  display: flex;
  align-items: center;
  gap: 18px;
  height: 22px;
}

.menu-tabs a {
  color: #444;
  text-decoration: none;
}

.menu-tabs .menu-first {
  display: flex;
  justify-content: flex-end;
  width: 11px;
  padding-right: 2px;
}

.ribbon-toggle {
  margin-left: 12px;
}

/* ribbon */
.ribbon {
  display: flex;
  height: 96px;
  padding-top: 1px;
  background: #eee;
  border-bottom: 1px solid #ccc;
}

.panel {
  display: flex;
  flex-direction: column;
  justify-content: space-between;
  border-right: 1px solid #d8d8d8;
  margin-bottom: 1px;
}

.panel h2 {
  margin: 0;
  font-size: 12px;
  font-weight: normal;
  line-height: 18px;
  text-align: center;
}

.tools {
  display: grid;
  padding-top: 4px;
}

.tool {
  position: relative;
  display: flex;
  flex-direction: column;
  align-items: center;
  gap: 4px;
  white-space: nowrap;
}

.tool:disabled {
  color: #b0b0b0;
}

.icon {
  width: 32px;
  height: 32px;
}

.drop {
  position: absolute;
  right: 0;
  bottom: 6px;
}

.glyph-a {
  font-family: "Liberation Sans", sans-serif;
  font-weight: bold;
}

.panel-forms .tools {
  grid-template-columns: 13px 44px 46px;
  padding-right: 4px;
}

.tool-first {
  align-items: flex-end;
}

.panel-model .tools {
  grid-template-columns: 46px 64px 48px 46px 58px;
  margin-right: -2px;
}

.panel-model .drop {
  right: 4px;
}

.panel-control .tools {
  grid-template-columns: 50px;
}

.panel-connectors .tools {
  grid-template-columns: repeat(5, 62px);
  padding-left: 4px;
  padding-right: 2px;
}

.panel-datum .tools {
  grid-template-columns: 58px 58px;
  padding-left: 4px;
  padding-right: 2px;
}

.panel-workplane {
  border-right: 0;
}

.panel-workplane .tools {
  grid-template-columns: 38px 40px 40px;
  padding-left: 2px;
  padding-right: 4px;
}

.panel-editor {
  border-right: 0;
}

.panel-editor .tools {
  grid-template-columns: 50px 96px;
  column-gap: 4px;
  padding-left: 4px;
  padding-right: 2px;
}

.panel-editor h2 {
  background: #c8c8e4;
}

.options-bar {
  height: 26px;
  background: #eee;
}

/* workspace */
.workspace {
  flex: 1;
  min-height: 0;
  display: flex;
  gap: 2px;
  padding-top: 2px;
}

.left-dock {
  width: 13px;
  background: #fff;
  border-right: 2px solid #eee;
}

.left-dock button {
  display: flex;
  align-items: center;
  justify-content: flex-end;
  width: 13px;
  height: 20px;
  padding-right: 3px;
  background: #eee;
}

.document {
  flex: 1;
  min-width: 0;
  display: flex;
  flex-direction: column;
  padding-bottom: 2px;
  background: #fff;
}

.view-tabs {
  display: flex;
  height: 20px;
  background: #ccc;
}

.view-tab {
  display: flex;
  align-items: center;
  gap: 7px;
  padding-left: 5px;
  color: #555;
}

.tab-floor {
  width: 131px;
}

.tab-section {
  width: 128px;
}

.view-tab.active {
  width: 128px;
  background: #fff;
  color: #333;
  font-weight: bold;
}

.view-tab.active button {
  margin-left: auto;
  padding-right: 4px;
}

.tab-list {
  margin-left: auto;
  padding-right: 5px;
}

.canvas-row {
  flex: 1;
  min-height: 0;
  display: flex;
  padding-right: 2px;
}

.canvas {
  position: relative;
  flex: 1;
  min-width: 0;
}

.drawing {
  width: 100%;
  height: 100%;
  shape-rendering: crispEdges;
}

.view-cube {
  position: absolute;
  top: 22px;
  right: 11px;
  font-size: 9px;
  font-family: "Liberation Sans", sans-serif;
  fill: #777;
}

.nav-bar {
  position: absolute;
  top: 122px;
  right: 1px;
  width: 36px;
  height: 118px;
  display: flex;
  flex-direction: column;
  align-items: center;
  justify-content: space-between;
  padding: 1px;
  background: #f3f3f3;
  border: 2px solid #b8b8b8;
  border-radius: 6px;
}

.nav-bar hr {
  width: 26px;
  margin: 0;
  border: 0;
  border-top: 1px solid #b8b8b8;
}

.nav-wheel {
  margin-top: 4px;
}

.nav-close,
.nav-more {
  align-self: flex-end;
}

.nav-more {
  margin-top: 6px;
}

.scroll-y {
  width: 16px;
  margin-top: 2px;
  display: flex;
  flex-direction: column;
  align-items: center;
  justify-content: space-between;
  padding: 5px 0 4px;
  background: #eee;
}

.thumb {
  background: #ccc;
}

.scroll-y .thumb {
  width: 16px;
  height: 17px;
}

.view-controls {
  display: flex;
  align-items: center;
  height: 17px;
  margin: 0 2px;
  background: #eee;
}

.scale {
  width: 79px;
  text-align: left;
  padding-left: 11px;
  color: #000;
  white-space: nowrap;
  font-size: 11px;
}

.view-icons {
  display: flex;
  gap: 4px;
}

.scroll-x {
  flex: 1;
  display: flex;
  align-items: center;
  justify-content: space-between;
  padding: 0 11px 0 8px;
}

.scroll-x .thumb {
  width: 17px;
  height: 15px;
}

/* properties palette */
.properties {
  width: 424px;
  display: flex;
  flex-direction: column;
  padding-left: 2px;
  background: #eee;
}

.prop-title {
  display: flex;
  align-items: center;
  justify-content: space-between;
  height: 20px;
  padding: 0 2px;
}

.type-selector {
  display: flex;
  align-items: center;
  justify-content: space-between;
  height: 72px;
  padding: 0 2px;
  border: 1px solid #ddd;
  background: linear-gradient(#f6f6f6, #e4e4e4);
}

.thumb-logo {
  font-family: "Liberation Sans", sans-serif;
  font-weight: bold;
}

.type-row {
  display: flex;
  height: 25px;
  padding: 1px 0;
}

.select-wrap {
  position: relative;
  flex: 1;
}

.select-wrap select {
  appearance: none;
  width: 100%;
  height: 23px;
  padding: 0 3px;
  border: 1px solid #a5a5a5;
  border-radius: 0;
  background: #e0e0e0;
  color: #000;
}

.select-wrap svg {
  position: absolute;
  right: 3px;
  top: 9px;
}

.edit-type {
  display: flex;
  align-items: center;
  gap: 5px;
  width: 82px;
  padding: 0 0 4px 6px;
  color: #a5a5a5;
  white-space: nowrap;
}

.prop-list {
  flex: 1;
  background: #fff;
}

.prop-list table {
  width: 100%;
  table-layout: fixed;
  border-spacing: 0;
  color: #000;
}

.prop-list tr {
  height: 18px;
}

.prop-list th,
.prop-list td {
  height: 18px;
  padding: 0;
  line-height: 15px;
  text-align: left;
  vertical-align: top;
}

.prop-list th {
  padding: 1px 5px 0 2px;
  background: #dcdcdc;
  font-weight: normal;
}

.prop-list th div {
  display: flex;
  align-items: center;
  justify-content: space-between;
}

.prop-list td {
  border-bottom: 1px dotted #555;
}

.prop-list td:first-child {
  padding-left: 8px;
}

.prop-list td:last-child {
  border-left: 1px dotted #555;
  border-right: 1px dotted #555;
}

.prop-list td.selected {
  border: 1px solid #000;
}

.prop-list label {
  display: block;
}

.prop-list .readonly {
  color: #777;
}

.prop-list input {
  display: block;
  margin: 0;
}

.prop-list input[type="text"] {
  width: 100%;
  height: 16px;
  padding: 0 3px;
  border: 0;
  outline: 0;
  background: none;
}

.prop-list input[type="checkbox"] {
  appearance: none;
  width: 13px;
  height: 13px;
  margin: 3px 0 0 4px;
  border: 1px solid #333;
  background: #fff;
}

.prop-list input[type="checkbox"]:checked::before {
  content: "";
  display: block;
  width: 8px;
  height: 4px;
  margin: 2px 0 0 1px;
  border-left: 1px solid #333;
  border-bottom: 1px solid #333;
  transform: rotate(-45deg);
}

.prop-footer {
  display: flex;
  align-items: flex-start;
  justify-content: space-between;
  height: 28px;
  padding: 3px 2px 0;
}

.prop-footer a {
  padding-top: 2px;
  color: #0066cc;
}

.prop-footer button {
  width: 73px;
  height: 21px;
  border: 1px solid #bbb;
  background: #ccc;
  color: #888;
}

.status-bar {
  display: flex;
  align-items: flex-end;
  justify-content: flex-end;
  height: 6px;
}
```
